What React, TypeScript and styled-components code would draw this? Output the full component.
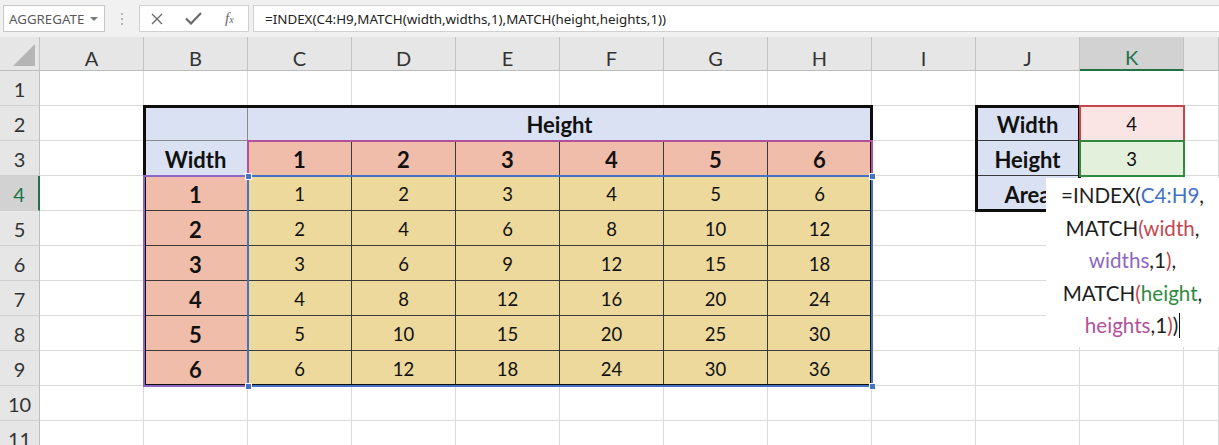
import React from "react";
import styled, { createGlobalStyle } from "styled-components";

const GlobalStyle = createGlobalStyle`
  html, body { margin: 0; padding: 0; background: #ffffff; overflow: hidden; }
  body { font-family: Lato, "Noto Sans", sans-serif; }
  * { box-sizing: border-box; }
`;

const C = {
  grid: "#dadada",
  headBg: "#e6e6e6",
  headSel: "#d2d2d2",
  headLine: "#c3c3c3",
  excelGreen: "#217346",
  blueHead: "#d9e1f2",
  salmon: "#f0bdaa",
  khaki: "#ecd99b",
  pink: "#fbe4e4",
  mint: "#e2f0dc",
  refBlue: "#4472c4",
  refRed: "#c4474f",
  refPurple: "#8c66c2",
  refGreen: "#2f8a3f",
  refMagenta: "#b3509c",
};

const Page = styled.div`
  width: 1219px;
  height: 445px;
  overflow: hidden;
  display: flex;
  flex-direction: column;
  background: #fff;
`;

/* ---------- formula bar ---------- */
const Toolbar = styled.div`
  flex: none;
  height: 37px;
  background: #f1f1f1;
  display: flex;
  align-items: flex-start;
  padding: 5px 0 0 3px;
`;

const NameBox = styled.div`
  width: 102px;
  height: 27px;
  background: #fff;
  border: 1px solid #c8c8c8;
  display: flex;
  align-items: center;
  justify-content: space-between;
  padding: 0 6px 0 5px;
  font-family: "Noto Sans", sans-serif;
  font-size: 13.3px;
  color: #5a5a5a;
`;

const Caret = styled.span`
  width: 0;
  height: 0;
  border-left: 4px solid transparent;
  border-right: 4px solid transparent;
  border-top: 4px solid #7a7a7a;
`;

const Dots = styled.div`
  width: 34px;
  height: 27px;
  display: flex;
  flex-direction: column;
  align-items: center;
  justify-content: center;
  gap: 3px;
  & > span {
    width: 2px;
    height: 2px;
    background: #b5b5b5;
  }
`;

const FxBox = styled.div`
  width: 110px;
  height: 27px;
  background: #fff;
  border: 1px solid #d0d0d0;
  display: flex;
  align-items: center;
  padding-left: 11px;
  color: #6a6a6a;
`;

const IconSlot = styled.span<{ $w: number }>`
  width: ${(p) => p.$w}px;
  display: flex;
  align-items: center;
`;

const FxText = styled.span`
  font-family: "Liberation Serif", serif;
  font-style: italic;
  font-size: 15px;
  color: #666;
  & > small {
    font-size: 10px;
  }
`;

const FormulaInput = styled.div`
  flex: 1;
  margin-left: 4px;
  height: 27px;
  background: #fff;
  border: 1px solid #d0d0d0;
  border-right: none;
  display: flex;
  align-items: center;
  padding-left: 11px;
  font-family: "Noto Sans", sans-serif;
  font-size: 13.4px;
  color: #222;
  white-space: nowrap;
`;

/* ---------- sheet ---------- */
const Sheet = styled.div`
  position: relative;
  flex: 1;
  display: grid;
  grid-template-columns: 40px repeat(11, 104px) 1fr;
  grid-template-rows: 34px repeat(11, 35px);
`;

const Corner = styled.div`
  grid-row: 1;
  grid-column: 1;
  background: ${C.headBg};
  border-right: 1px solid ${C.headLine};
  border-bottom: 1px solid #bdbdbd;
  display: flex;
  align-items: flex-end;
  justify-content: flex-end;
  padding: 0 4px 4px 0;
`;

const ColHead = styled.div<{ $col: number; $sel?: boolean }>`
  grid-row: 1;
  grid-column: ${(p) => p.$col};
  background: ${(p) => (p.$sel ? C.headSel : C.headBg)};
  border-right: 1px solid ${C.headLine};
  border-bottom: ${(p) => (p.$sel ? `2px solid ${C.excelGreen}` : "1px solid #bdbdbd")};
  display: flex;
  align-items: center;
  justify-content: center;
  padding-top: ${(p) => (p.$sel ? 7 : 8)}px;
  font-size: 20px;
  color: ${(p) => (p.$sel ? C.excelGreen : "#333")};
`;

const RowHead = styled.div<{ $row: number; $sel?: boolean }>`
  grid-row: ${(p) => p.$row};
  grid-column: 1;
  background: ${(p) => (p.$sel ? C.headSel : C.headBg)};
  border-right: ${(p) => (p.$sel ? `2px solid ${C.excelGreen}` : "1px solid #bdbdbd")};
  border-bottom: 1px solid #d0d0d0;
  display: flex;
  align-items: center;
  justify-content: center;
  padding-top: 1px;
  font-size: 20px;
  color: ${(p) => (p.$sel ? C.excelGreen : "#333")};
`;

const Cell = styled.div<{
  $row: number;
  $col: number;
  $span?: number;
  $bg?: string;
  $bold?: boolean;
  $line?: string;
}>`
  grid-row: ${(p) => p.$row};
  grid-column: ${(p) => p.$col} / span ${(p) => p.$span ?? 1};
  background: ${(p) => p.$bg ?? "#fff"};
  border-right: 1px solid ${(p) => p.$line ?? C.grid};
  border-bottom: 1px solid ${(p) => p.$line ?? C.grid};
  display: flex;
  align-items: center;
  justify-content: center;
  padding-top: 2px;
  font-size: ${(p) => (p.$bold ? "22px" : "18.5px")};
  font-weight: ${(p) => (p.$bold ? 700 : 400)};
  color: #111;
  white-space: nowrap;
  overflow: hidden;
`;

const Frame = styled.div<{
  $r1: number;
  $r2: number;
  $c1: number;
  $c2: number;
  $color: string;
  $w: number;
  $z?: number;
}>`
  grid-row: ${(p) => p.$r1} / ${(p) => p.$r2};
  grid-column: ${(p) => p.$c1} / ${(p) => p.$c2};
  margin: -1px;
  border: ${(p) => p.$w}px solid ${(p) => p.$color};
  position: relative;
  z-index: ${(p) => p.$z ?? 2};
  pointer-events: none;
`;

const Handle = styled.span<{ $top?: boolean; $left?: boolean }>`
  position: absolute;
  width: 7px;
  height: 7px;
  background: ${C.refBlue};
  border: 1px solid #ffffff;
  ${(p) => (p.$top ? "top: -4.5px;" : "bottom: -4.5px;")}
  ${(p) => (p.$left ? "left: -4.5px;" : "right: -4.5px;")}
`;

const Editor = styled.div`
  position: absolute;
  left: 1046px;
  top: 141px;
  width: 175px;
  height: 169px;
  background: #fff;
  z-index: 5;
  display: flex;
  flex-direction: column;
  align-items: center;
  font-size: 20.6px;
  line-height: 32.5px;
  color: #1e1e1e;
  padding-top: 1px;
  padding-right: 2px;
`;

const EditLine = styled.div`
  white-space: nowrap;
  display: flex;
  align-items: center;
`;

const Ref = styled.span<{ $c: string }>`
  color: ${(p) => p.$c};
`;

const TextCaret = styled.span`
  display: inline-block;
  width: 1px;
  height: 25px;
  background: #111;
  margin-left: 1px;
`;

const letters = ["A", "B", "C", "D", "E", "F", "G", "H", "I", "J", "K", ""];

type CellSpec = {
  row: number;
  col: number;
  span?: number;
  text?: string;
  bg?: string;
  bold?: boolean;
  line?: string;
};

function buildCells(): CellSpec[] {
  const cells: CellSpec[] = [];
  const dark = "#3a3a3a";
  const taken = new Set<string>();
  const put = (s: CellSpec) => {
    cells.push(s);
    for (let i = 0; i < (s.span ?? 1); i++) taken.add(`${s.row}-${s.col + i}`);
  };
  // sheet row r -> grid row r+1 ; column A -> grid col 2
  put({ row: 3, col: 3, bg: C.blueHead, line: "#8a8a8a" });
  put({ row: 3, col: 4, span: 6, text: "Height", bg: C.blueHead, bold: true, line: dark });
  put({ row: 4, col: 3, text: "Width", bg: C.blueHead, bold: true, line: dark });
  for (let h = 1; h <= 6; h++) {
    put({ row: 4, col: 3 + h, text: String(h), bg: C.salmon, bold: true, line: dark });
  }
  for (let w = 1; w <= 6; w++) {
    put({ row: 4 + w, col: 3, text: String(w), bg: C.salmon, bold: true, line: dark });
    for (let h = 1; h <= 6; h++) {
      put({ row: 4 + w, col: 3 + h, text: String(w * h), bg: C.khaki, line: dark });
    }
  }
  put({ row: 3, col: 11, text: "Width", bg: C.blueHead, bold: true, line: dark });
  put({ row: 4, col: 11, text: "Height", bg: C.blueHead, bold: true, line: dark });
  put({ row: 5, col: 11, text: "Area", bg: C.blueHead, bold: true, line: dark });
  put({ row: 3, col: 12, text: "4", bg: C.pink });
  put({ row: 4, col: 12, text: "3", bg: C.mint });
  for (let r = 2; r <= 12; r++) {
    for (let c = 2; c <= 13; c++) {
      if (!taken.has(`${r}-${c}`)) put({ row: r, col: c });
    }
  }
  return cells;
}

const cells = buildCells();

export default function App() {
  return (
    <Page>
      <GlobalStyle />
      <Toolbar>
        <NameBox>
          AGGREGATE
          <Caret />
        </NameBox>
        <Dots>
          <span />
          <span />
          <span />
        </Dots>
        <FxBox>
          <IconSlot $w={34}>
            <svg width="12" height="12" viewBox="0 0 12 12">
              <path d="M1 1 L11 11 M11 1 L1 11" stroke="#6b6b6b" strokeWidth="1.4" fill="none" />
            </svg>
          </IconSlot>
          <IconSlot $w={40}>
            <svg width="17" height="13" viewBox="0 0 17 13">
              <path d="M1 6.5 L6 11.5 L16 1" stroke="#6b6b6b" strokeWidth="2.2" fill="none" />
            </svg>
          </IconSlot>
          <FxText>
            f<small>x</small>
          </FxText>
        </FxBox>
        <FormulaInput>=INDEX(C4:H9,MATCH(width,widths,1),MATCH(height,heights,1))</FormulaInput>
      </Toolbar>

      <Sheet>
        <Corner>
          <svg width="22" height="22" viewBox="0 0 22 22">
            <path d="M22 0 L22 22 L0 22 Z" fill="#b5b5b5" />
          </svg>
        </Corner>
        {letters.map((l, i) => (
          <ColHead key={`h${i}`} $col={i + 2} $sel={l === "K"}>
            {l}
          </ColHead>
        ))}
        {Array.from({ length: 11 }, (_, i) => (
          <RowHead key={`r${i}`} $row={i + 2} $sel={i + 1 === 4}>
            {i + 1}
          </RowHead>
        ))}
        {cells.map((c) => (
          <Cell
            key={`${c.row}-${c.col}`}
            $row={c.row}
            $col={c.col}
            $span={c.span}
            $bg={c.bg}
            $bold={c.bold}
            $line={c.line}
          >
            {c.text}
          </Cell>
        ))}

        <Frame $r1={3} $r2={11} $c1={3} $c2={10} $color="#0d0d0d" $w={3} />
        <Frame $r1={3} $r2={6} $c1={11} $c2={12} $color="#0d0d0d" $w={3} />
        <Frame $r1={5} $r2={11} $c1={3} $c2={4} $color={C.refPurple} $w={2} $z={3} />
        <Frame $r1={4} $r2={5} $c1={4} $c2={10} $color={C.refMagenta} $w={2} $z={3} />
        <Frame $r1={5} $r2={11} $c1={4} $c2={10} $color={C.refBlue} $w={2} $z={4}>
          <Handle $top $left />
          <Handle $top />
          <Handle $left />
          <Handle />
        </Frame>
        <Frame $r1={3} $r2={4} $c1={12} $c2={13} $color={C.refRed} $w={2} $z={3} />
        <Frame $r1={4} $r2={5} $c1={12} $c2={13} $color={C.refGreen} $w={2} $z={3} />

        <Editor>
          <EditLine>
            =INDEX(<Ref $c={C.refBlue}>C4:H9</Ref>,
          </EditLine>
          <EditLine>
            MATCH<Ref $c={C.refRed}>(width</Ref>,
          </EditLine>
          <EditLine>
            <Ref $c={C.refPurple}>widths</Ref>,1<Ref $c={C.refRed}>)</Ref>,
          </EditLine>
          <EditLine>
            MATCH<Ref $c={C.refRed}>(</Ref>
            <Ref $c={C.refGreen}>height</Ref>,
          </EditLine>
          <EditLine>
            <Ref $c={C.refMagenta}>heights</Ref>,1<Ref $c={C.refRed}>)</Ref>)
            <TextCaret />
          </EditLine>
        </Editor>
      </Sheet>
    </Page>
  );
}
